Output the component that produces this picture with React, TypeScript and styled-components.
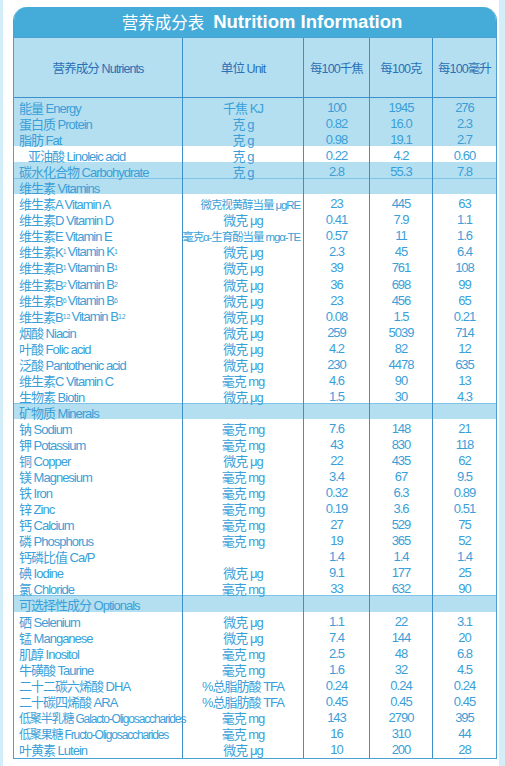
import React from "react";
import styled, { createGlobalStyle, css } from "styled-components";

const GlobalStyle = createGlobalStyle`
  html, body {
    margin: 0;
    padding: 0;
    background: #d4eef9;
  }
  body {
    font-family: "Liberation Sans", "Noto Sans CJK SC", sans-serif;
  }
`;

const Page = styled.div`
  width: 496px;
  min-height: 766px;
  margin-left: 3px;
  background: #ffffff;
  padding: 7px 0 0 10px;
  box-sizing: border-box;
`;

const Table = styled.div`
  width: 484px;
  border: 1.5px solid #4aa2d4;
  border-top: none;
  border-radius: 14px 14px 0 0;
  box-sizing: border-box;
  overflow: hidden;
  padding-bottom: 2px;
`;

const Title = styled.div`
  height: 30px;
  background: #45acd9;
  display: flex;
  align-items: center;
  justify-content: center;
  gap: 9px;
  padding-left: 14px;
  color: #ffffff;
  white-space: nowrap;

  > span:first-child {
    font-family: "Noto Sans CJK SC", sans-serif;
    font-size: 16.5px;
  }

  > b {
    font-family: "Liberation Sans", sans-serif;
    font-size: 18.5px;
    font-weight: bold;
  }
`;

const cols = "168px 121px 66px 63px 1fr";

const HeaderRow = styled.div`
  display: grid;
  grid-template-columns: ${cols};
  height: 61px;
  background: #b4dff0;
  border-top: 1.5px solid #4aa2d4;
  border-bottom: 1.5px solid #3d90c9;
  box-sizing: border-box;
`;

const HeadCell = styled.div<{ first?: boolean }>`
  display: flex;
  align-items: center;
  justify-content: center;
  color: #2b70b6;
  font-size: 12.5px;
  letter-spacing: -0.9px;
  white-space: nowrap;
  ${({ first }) => !first && css`border-left: 1.5px solid #3d90c9;`}
`;

type Tone = "blue" | "white" | "section";

const Row = styled.div<{ tone: Tone }>`
  display: grid;
  grid-template-columns: ${cols};
  height: 16.05px;
  background: ${({ tone }) => (tone === "white" ? "#ffffff" : "#b4dff0")};
  ${({ tone }) =>
    tone === "section" &&
    css`
      box-shadow: inset 0 1px 0 #7fc3e6;
    `}
`;

const Cell = styled.div<{ first?: boolean; align?: "left" | "center" }>`
  display: flex;
  align-items: center;
  justify-content: ${({ align }) => (align === "left" ? "flex-start" : "center")};
  color: #3a9fd9;
  font-size: 13px;
  letter-spacing: -1px;
  white-space: nowrap;
  ${({ first }) => !first && css`border-left: 1.5px solid #3d90c9;`}
`;

const NameCell = styled(Cell)<{ indent?: boolean; narrow?: boolean }>`
  padding-left: ${({ indent }) => (indent ? "14px" : "5px")};
  ${({ narrow }) =>
    narrow &&
    css`
      letter-spacing: -1.15px;
      font-size: 12px;
    `}
`;

const UnitCell = styled(Cell)<{ narrow?: boolean }>`
  ${({ narrow }) =>
    narrow &&
    css`
      font-size: 11.5px;
      letter-spacing: -1.1px;
      justify-content: flex-end;
      padding-right: 3px;
    `}
`;

const Sub = styled.span`
  font-size: 7px;
  vertical-align: -2px;
  letter-spacing: 0;
  margin: 0 1px 0 0;
`;

type Item = {
  name: React.ReactNode;
  unit?: string;
  v?: string[];
  tone?: Tone;
  indent?: boolean;
  narrowName?: boolean;
  narrowUnit?: boolean;
};

const vit = (l: string, s?: string): React.ReactNode => (
  <>
    维生素{l}
    {s && <Sub>{s}</Sub>} Vitamin {l}
    {s && <Sub>{s}</Sub>}
  </>
);

const ug = "微克 μg";
const mg = "毫克 mg";

const items: Item[] = [
  { name: "能量 Energy", unit: "千焦 KJ", v: ["100", "1945", "276"], tone: "blue" },
  { name: "蛋白质 Protein", unit: "克 g", v: ["0.82", "16.0", "2.3"], tone: "blue" },
  { name: "脂肪 Fat", unit: "克 g", v: ["0.98", "19.1", "2.7"], tone: "blue" },
  { name: "亚油酸 Linoleic acid", unit: "克 g", v: ["0.22", "4.2", "0.60"], tone: "white", indent: true },
  { name: "碳水化合物 Carbohydrate", unit: "克 g", v: ["2.8", "55.3", "7.8"], tone: "blue" },
  { name: "维生素 Vitamins", tone: "section" },
  { name: vit("A"), unit: "微克视黄醇当量 μgRE", v: ["23", "445", "63"], narrowUnit: true },
  { name: vit("D"), unit: ug, v: ["0.41", "7.9", "1.1"] },
  { name: vit("E"), unit: "毫克α-生育酚当量 mgα-TE", v: ["0.57", "11", "1.6"], narrowUnit: true },
  { name: vit("K", "1"), unit: ug, v: ["2.3", "45", "6.4"] },
  { name: vit("B", "1"), unit: ug, v: ["39", "761", "108"] },
  { name: vit("B", "2"), unit: ug, v: ["36", "698", "99"] },
  { name: vit("B", "6"), unit: ug, v: ["23", "456", "65"] },
  { name: vit("B", "12"), unit: ug, v: ["0.08", "1.5", "0.21"] },
  { name: "烟酸 Niacin", unit: ug, v: ["259", "5039", "714"] },
  { name: "叶酸 Folic acid", unit: ug, v: ["4.2", "82", "12"] },
  { name: "泛酸 Pantothenic acid", unit: ug, v: ["230", "4478", "635"] },
  { name: vit("C"), unit: mg, v: ["4.6", "90", "13"] },
  { name: "生物素 Biotin", unit: ug, v: ["1.5", "30", "4.3"] },
  { name: "矿物质 Minerals", tone: "section" },
  { name: "钠 Sodium", unit: mg, v: ["7.6", "148", "21"] },
  { name: "钾 Potassium", unit: mg, v: ["43", "830", "118"] },
  { name: "铜 Copper", unit: ug, v: ["22", "435", "62"] },
  { name: "镁 Magnesium", unit: mg, v: ["3.4", "67", "9.5"] },
  { name: "铁 Iron", unit: mg, v: ["0.32", "6.3", "0.89"] },
  { name: "锌 Zinc", unit: mg, v: ["0.19", "3.6", "0.51"] },
  { name: "钙 Calcium", unit: mg, v: ["27", "529", "75"] },
  { name: "磷 Phosphorus", unit: mg, v: ["19", "365", "52"] },
  { name: "钙磷比值 Ca/P", unit: "", v: ["1.4", "1.4", "1.4"] },
  { name: "碘 Iodine", unit: ug, v: ["9.1", "177", "25"] },
  { name: "氯 Chloride", unit: mg, v: ["33", "632", "90"] },
  { name: "可选择性成分 Optionals", tone: "section" },
  { name: "硒 Selenium", unit: ug, v: ["1.1", "22", "3.1"] },
  { name: "锰 Manganese", unit: ug, v: ["7.4", "144", "20"] },
  { name: "肌醇 Inositol", unit: mg, v: ["2.5", "48", "6.8"] },
  { name: "牛磺酸 Taurine", unit: mg, v: ["1.6", "32", "4.5"] },
  { name: "二十二碳六烯酸 DHA", unit: "%总脂肪酸 TFA", v: ["0.24", "0.24", "0.24"] },
  { name: "二十碳四烯酸 ARA", unit: "%总脂肪酸 TFA", v: ["0.45", "0.45", "0.45"] },
  { name: "低聚半乳糖 Galacto-Oligosaccharides", unit: mg, v: ["143", "2790", "395"], narrowName: true },
  { name: "低聚果糖 Fructo-Oligosaccharides", unit: mg, v: ["16", "310", "44"], narrowName: true },
  { name: "叶黄素 Lutein", unit: ug, v: ["10", "200", "28"] },
];

export default function App() {
  return (
    <>
      <GlobalStyle />
      <Page>
        <Table>
          <Title>
            <span>营养成分表</span>
            <b>Nutritiom Information</b>
          </Title>
          <HeaderRow>
            <HeadCell first>营养成分 Nutrients</HeadCell>
            <HeadCell>单位 Unit</HeadCell>
            <HeadCell>每100千焦</HeadCell>
            <HeadCell>每100克</HeadCell>
            <HeadCell>每100毫升</HeadCell>
          </HeaderRow>
          {items.map((it, i) => {
            const tone = it.tone ?? "white";
            const vals = it.v ?? ["", "", ""];
            return (
              <Row key={i} tone={tone}>
                <NameCell first align="left" indent={it.indent} narrow={it.narrowName}>
                  {it.name}
                </NameCell>
                <UnitCell narrow={it.narrowUnit}>{it.unit ?? ""}</UnitCell>
                {vals.map((x, j) => (
                  <Cell key={j}>{x}</Cell>
                ))}
              </Row>
            );
          })}
        </Table>
      </Page>
    </>
  );
}
